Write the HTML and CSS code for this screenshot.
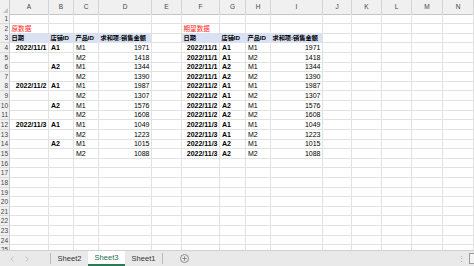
FILE: index.html
```html
<!DOCTYPE html>
<html lang="zh">
<head>
<meta charset="utf-8">
<title>Sheet3</title>
<link rel="stylesheet" href="styles.css">
</head>
<body>
<div class="app">
  <div class="sheet">
    <div class="row colhead">
      <span class="corner"><i class="tri"></i></span>
      <span>A</span><span>B</span><span>C</span><span>D</span><span>E</span><span>F</span><span>G</span><span>H</span><span>I</span><span>J</span><span>K</span><span>L</span><span>M</span><span>N</span>
    </div>
    <div class="row"><span class="rh">1</span><span></span><span></span><span></span><span></span><span></span><span></span><span></span><span></span><span></span><span></span><span></span><span></span><span></span><span></span></div>
    <div class="row"><span class="rh">2</span><span class="red">原数据</span><span></span><span></span><span></span><span></span><span class="red">期望数据</span><span></span><span></span><span></span><span></span><span></span><span></span><span></span><span></span></div>
    <div class="row"><span class="rh">3</span><span class="hd">日期</span><span class="hd">店铺ID</span><span class="hd">产品ID</span><span class="hd">求和项:销售金额</span><span></span><span class="hd">日期</span><span class="hd">店铺ID</span><span class="hd">产品ID</span><span class="hd">求和项:销售金额</span><span></span><span></span><span></span><span></span><span></span></div>
    <div class="row"><span class="rh">4</span><span class="b r">2022/11/1</span><span class="b">A1</span><span>M1</span><span class="r">1971</span><span></span><span class="b r">2022/11/1</span><span class="b">A1</span><span>M1</span><span class="r">1971</span><span></span><span></span><span></span><span></span><span></span></div>
    <div class="row"><span class="rh">5</span><span></span><span></span><span>M2</span><span class="r">1418</span><span></span><span class="b r">2022/11/1</span><span class="b">A1</span><span>M2</span><span class="r">1418</span><span></span><span></span><span></span><span></span><span></span></div>
    <div class="row"><span class="rh">6</span><span></span><span class="b">A2</span><span>M1</span><span class="r">1344</span><span></span><span class="b r">2022/11/1</span><span class="b">A2</span><span>M1</span><span class="r">1344</span><span></span><span></span><span></span><span></span><span></span></div>
    <div class="row"><span class="rh">7</span><span></span><span></span><span>M2</span><span class="r">1390</span><span></span><span class="b r">2022/11/1</span><span class="b">A2</span><span>M2</span><span class="r">1390</span><span></span><span></span><span></span><span></span><span></span></div>
    <div class="row"><span class="rh">8</span><span class="b r">2022/11/2</span><span class="b">A1</span><span>M1</span><span class="r">1987</span><span></span><span class="b r">2022/11/2</span><span class="b">A1</span><span>M1</span><span class="r">1987</span><span></span><span></span><span></span><span></span><span></span></div>
    <div class="row"><span class="rh">9</span><span></span><span></span><span>M2</span><span class="r">1307</span><span></span><span class="b r">2022/11/2</span><span class="b">A1</span><span>M2</span><span class="r">1307</span><span></span><span></span><span></span><span></span><span></span></div>
    <div class="row"><span class="rh">10</span><span></span><span class="b">A2</span><span>M1</span><span class="r">1576</span><span></span><span class="b r">2022/11/2</span><span class="b">A2</span><span>M1</span><span class="r">1576</span><span></span><span></span><span></span><span></span><span></span></div>
    <div class="row"><span class="rh">11</span><span></span><span></span><span>M2</span><span class="r">1608</span><span></span><span class="b r">2022/11/2</span><span class="b">A2</span><span>M2</span><span class="r">1608</span><span></span><span></span><span></span><span></span><span></span></div>
    <div class="row"><span class="rh">12</span><span class="b r">2022/11/3</span><span class="b">A1</span><span>M1</span><span class="r">1049</span><span></span><span class="b r">2022/11/3</span><span class="b">A1</span><span>M1</span><span class="r">1049</span><span></span><span></span><span></span><span></span><span></span></div>
    <div class="row"><span class="rh">13</span><span></span><span></span><span>M2</span><span class="r">1223</span><span></span><span class="b r">2022/11/3</span><span class="b">A1</span><span>M2</span><span class="r">1223</span><span></span><span></span><span></span><span></span><span></span></div>
    <div class="row"><span class="rh">14</span><span></span><span class="b">A2</span><span>M1</span><span class="r">1015</span><span></span><span class="b r">2022/11/3</span><span class="b">A2</span><span>M1</span><span class="r">1015</span><span></span><span></span><span></span><span></span><span></span></div>
    <div class="row"><span class="rh">15</span><span></span><span></span><span>M2</span><span class="r">1088</span><span></span><span class="b r">2022/11/3</span><span class="b">A2</span><span>M2</span><span class="r">1088</span><span></span><span></span><span></span><span></span><span></span></div>
    <div class="row"><span class="rh">16</span><span></span><span></span><span></span><span></span><span></span><span></span><span></span><span></span><span></span><span></span><span></span><span></span><span></span><span></span></div>
    <div class="row"><span class="rh">17</span><span></span><span></span><span></span><span></span><span></span><span></span><span></span><span></span><span></span><span></span><span></span><span></span><span></span><span></span></div>
    <div class="row"><span class="rh">18</span><span></span><span></span><span></span><span></span><span></span><span></span><span></span><span></span><span></span><span></span><span></span><span></span><span></span><span></span></div>
    <div class="row"><span class="rh">19</span><span></span><span></span><span></span><span></span><span></span><span></span><span></span><span></span><span></span><span></span><span></span><span></span><span></span><span></span></div>
    <div class="row"><span class="rh">20</span><span></span><span></span><span></span><span></span><span></span><span></span><span></span><span></span><span></span><span></span><span></span><span></span><span></span><span></span></div>
    <div class="row"><span class="rh">21</span><span></span><span></span><span></span><span></span><span></span><span></span><span></span><span></span><span></span><span></span><span></span><span></span><span></span><span></span></div>
    <div class="row"><span class="rh">22</span><span></span><span></span><span></span><span></span><span></span><span></span><span></span><span></span><span></span><span></span><span></span><span></span><span></span><span></span></div>
    <div class="row"><span class="rh">23</span><span></span><span></span><span></span><span></span><span></span><span></span><span></span><span></span><span></span><span></span><span></span><span></span><span></span><span></span></div>
    <div class="row"><span class="rh">24</span><span></span><span></span><span></span><span></span><span></span><span></span><span></span><span></span><span></span><span></span><span></span><span></span><span></span><span></span></div>
    <div class="row"><span class="rh">25</span><span></span><span></span><span></span><span></span><span></span><span></span><span></span><span></span><span></span><span></span><span></span><span></span><span></span><span></span></div>
  </div>
  <div class="tabbar">
    <div class="nav">
      <svg width="4" height="6" viewBox="0 0 4 6"><path d="M3.5 0.5 L0.8 3 L3.5 5.5" fill="none" stroke="#c2c2c2" stroke-width="0.9"/></svg>
      <svg width="4" height="6" viewBox="0 0 4 6"><path d="M0.5 0.5 L3.2 3 L0.5 5.5" fill="none" stroke="#c2c2c2" stroke-width="0.9"/></svg>
    </div>
    <div class="sep"></div>
    <div class="tab">Sheet2</div>
    <div class="tab active">Sheet3</div>
    <div class="tab">Sheet1</div>
    <div class="sep"></div>
    <div class="add">
      <svg width="9" height="9" viewBox="0 0 9 9"><circle cx="4.5" cy="4.5" r="4" fill="none" stroke="#7a7a7a" stroke-width="0.8"/><path d="M4.5 2.3 V6.7 M2.3 4.5 H6.7" stroke="#7a7a7a" stroke-width="0.8"/></svg>
    </div>
    <div class="fill"></div>
    <div class="vdots">⋮</div>
    <div class="scroll"></div>
  </div>
</div>
</body>
</html>
```

FILE: styles.css
```css
* { box-sizing: border-box; }
html, body { margin: 0; padding: 0; background: #ffffff; }
body {
  width: 474px;
  height: 266px;
  overflow: hidden;
  font-family: "Liberation Sans", "Noto Sans CJK SC", sans-serif;
  color: #000;
}
.app { width: 474px; height: 266px; display: flex; flex-direction: column; }
.sheet { height: 250px; overflow: hidden; flex: none; }
.row {
  display: grid;
  grid-template-columns: 10px 39px 25px 25px 53px 30px 38px 26px 25px 52px 29px 30px 30px 31px 31px;
  height: 9.65px;
}
.row > span {
  border-right: 1px solid #e2e2e2;
  border-bottom: 1px solid #e2e2e2;
  font-size: 7px;
  line-height: 9px;
  padding: 0 1.5px 0 2px;
  white-space: nowrap;
  overflow: visible;
  position: relative;
}
.row > span.rh {
  background: #f0f0f0;
  border-right: 1px solid #c9c9c9;
  border-bottom: 1px solid #dadada;
  color: #444;
  text-align: right;
  padding: 0 1px 0 0;
  font-size: 6.5px;
  overflow: hidden;
}
.colhead { height: 14px; }
.colhead > span {
  background: #f0f0f0;
  border-right: 1px solid #d4d4d4;
  border-bottom: 1px solid #c6c6c6;
  color: #444;
  text-align: center;
  line-height: 14px;
  font-size: 6.5px;
  padding: 0;
}
.colhead > span.corner { border-right: 1px solid #c9c9c9; }
.tri {
  position: absolute;
  right: 1px;
  bottom: 1px;
  width: 0;
  height: 0;
  border-left: 5px solid transparent;
  border-bottom: 5px solid #c4c4c4;
}
.row > span.red { color: #ff2a1a; font-size: 6.6px; padding-left: 1.5px; }
.row > span.hd {
  background: #d9e1f2;
  font-weight: bold;
  font-size: 6.2px;
  padding-left: 1.5px;
  border-right-color: #d9e1f2;
  border-bottom-color: #d9e1f2;
}
.row > span.hd:nth-child(5), .row > span.hd:nth-child(10) { border-right-color: #e2e2e2; }
.b { font-weight: bold; }
.r { text-align: right; }

.tabbar {
  flex: none;
  height: 16px;
  background: #e9e9e9;
  border-top: 1px solid #cfcfcf;
  display: flex;
  align-items: stretch;
  font-size: 7.5px;
  color: #333;
}
.nav {
  width: 50px;
  display: flex;
  align-items: center;
  gap: 11px;
  padding-left: 10px;
}
.sep { width: 1px; background: #b9b9b9; margin: 2px 0 2px; }
.tab {
  width: 37px;
  display: flex;
  align-items: center;
  justify-content: center;
  padding-bottom: 1px;
}
.tab:first-of-type { width: 36px; }
.tab.active {
  background: #ffffff;
  color: #1e6b46;
  border-bottom: 2px solid #2b7a56;
  padding-bottom: 0;
}
.add {
  width: 43px;
  display: flex;
  align-items: center;
  justify-content: center;
}
.fill { flex: 1; }
.vdots {
  color: #9a9a9a;
  font-size: 7px;
  display: flex;
  align-items: center;
  padding-right: 4px;
}
.scroll {
  width: 5px;
  margin: 2px 0 2px;
  border: 1px solid #9a9a9a;
  border-right: none;
  background: #f4f4f4;
}
```
